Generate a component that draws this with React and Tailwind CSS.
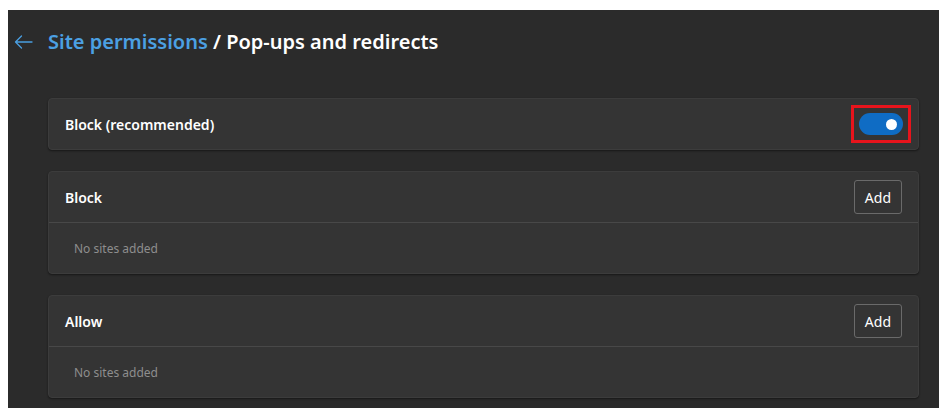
import React from 'react'

function Toggle() {
  return (
    <div className="border-[3px] border-[#e8141c] px-[5px] py-[5px]">
      <div className="w-[44px] h-[22px] rounded-full bg-[#0f6cc4] flex items-center justify-end pr-[6px]">
        <div className="w-[11px] h-[11px] rounded-full bg-white" />
      </div>
    </div>
  )
}

function SiteList({ title }) {
  return (
    <div className="bg-[#343434] rounded-[4px] border border-[#3c3c3c] shadow-[0_1px_2px_rgba(0,0,0,0.45)]">
      <div className="h-[51px] flex items-center justify-between pl-[16px] pr-[16px] border-b border-[#484848]">
        <span className="text-[14px] font-semibold text-white">{title}</span>
        <button className="h-[34px] px-[10px] rounded-[3px] border border-[#6a6a6a] text-[14px] text-white">
          Add
        </button>
      </div>
      <div className="h-[50px] flex items-center pl-[25px]">
        <span className="text-[12px] text-[#8e8e8e] translate-y-[1px]">No sites added</span>
      </div>
    </div>
  )
}

export default function App() {
  return (
    <div className="bg-white pt-[10px] pl-[8px] pr-[6px] pb-[12px]" style={{ fontFamily: '"Noto Sans", "Open Sans", sans-serif' }}>
      <div className="bg-[#2b2b2b] h-[398px] pl-[6px] pr-[20px] pt-[18px]">
        <div className="flex items-center h-[28px]">
          <span className="w-[34px] flex items-center">
            <svg width="19" height="14" viewBox="0 0 19 14" fill="none" stroke="#4a9fe0" strokeWidth="1.3" strokeLinecap="round" strokeLinejoin="round">
              <path d="M18 7H1.5M7.5 1L1.5 7l6 6" />
            </svg>
          </span>
          <h1 className="text-[20px] font-semibold">
            <span className="text-[#4ba0e3]">Site permissions</span>
            <span className="text-white"> / Pop-ups and redirects</span>
          </h1>
        </div>
        <div className="pl-[34px] mt-[42px] flex flex-col gap-[21px]">
          <div className="h-[52px] bg-[#343434] rounded-[4px] border border-[#3c3c3c] shadow-[0_1px_2px_rgba(0,0,0,0.45)] flex items-center justify-between pl-[16px] pr-[7px]">
            <span className="text-[14px] font-semibold text-white">Block (recommended)</span>
            <Toggle />
          </div>
          <SiteList title="Block" />
          <SiteList title="Allow" />
        </div>
      </div>
    </div>
  )
}
